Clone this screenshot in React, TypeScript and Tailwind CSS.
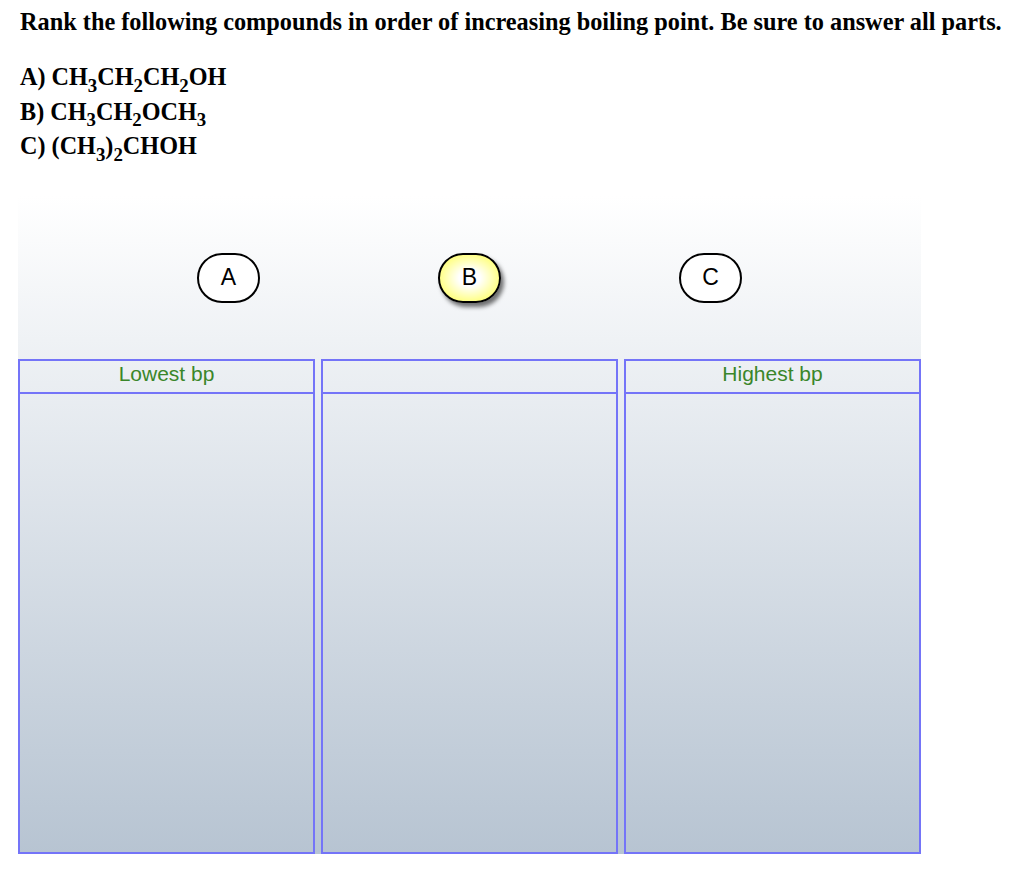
const COMPOUNDS = [
  { label: "A)", parts: ["CH", "3", "CH", "2", "CH", "2", "OH"] },
  { label: "B)", parts: ["CH", "3", "CH", "2", "OCH", "3"] },
  { label: "C)", parts: ["(CH", "3", ")", "2", "CHOH"] },
]

const CHOICES = ["A", "B", "C"]
const BINS = ["Lowest bp", "", "Highest bp"]

function Formula({ parts }: { parts: string[] }) {
  // odd entries are subscripts
  return (
    <>
      {parts.map((p, i) =>
        i % 2 === 1 ? (
          <sub key={i} className="-bottom-[0.35em] text-[78%]">
            {p}
          </sub>
        ) : (
          <span key={i}>{p}</span>
        )
      )}
    </>
  )
}

function Pill({ letter, active }: { letter: string; active?: boolean }) {
  return (
    <div
      className={
        active
          ? "flex h-[50px] w-[63px] items-center justify-center rounded-full border-[2.5px] border-black bg-[radial-gradient(ellipse_at_center,#ffffff_25%,#ffff5a_90%)] shadow-[3px_4px_4px_rgba(0,0,0,0.55)]"
          : "flex h-[50px] w-[63px] items-center justify-center rounded-full border-[2.5px] border-black bg-white"
      }
    >
      <span className="text-[23px] leading-none text-black">{letter}</span>
    </div>
  )
}

export default function App() {
  return (
    <div className="min-h-[876px] bg-white pb-8 font-['Liberation_Serif',serif] text-black">
      <h1 className="pl-[20px] pt-[8px] text-[24.3px] font-bold leading-[28px]">
        Rank the following compounds in order of increasing boiling point. Be
        sure to answer all parts.
      </h1>

      <div className="mt-[24px] pl-[20px] text-[24.2px] font-bold leading-[34.5px]">
        {COMPOUNDS.map((c) => (
          <div key={c.label}>
            {c.label} <Formula parts={c.parts} />
          </div>
        ))}
      </div>

      <div className="ml-[18px] mt-[32px] w-[903px] bg-gradient-to-b from-white to-[#b7c4d2] font-['Liberation_Sans',Arial,sans-serif]">
        <div className="flex justify-center gap-[178px] pb-[56px] pt-[57px]">
          {CHOICES.map((c) => (
            <Pill key={c} letter={c} active={c === "B"} />
          ))}
        </div>

        <div className="grid grid-cols-[297px_297px_297px] justify-between">
          {BINS.map((title, i) => (
            <div key={i} className="flex h-[495px] flex-col border-2 border-[#7474f8]">
              <div className="flex h-[33px] items-center justify-center border-b-2 border-[#7474f8] pb-[5px] text-[21px] text-[#3a862a]">
                {title}
              </div>
            </div>
          ))}
        </div>
      </div>
    </div>
  )
}
